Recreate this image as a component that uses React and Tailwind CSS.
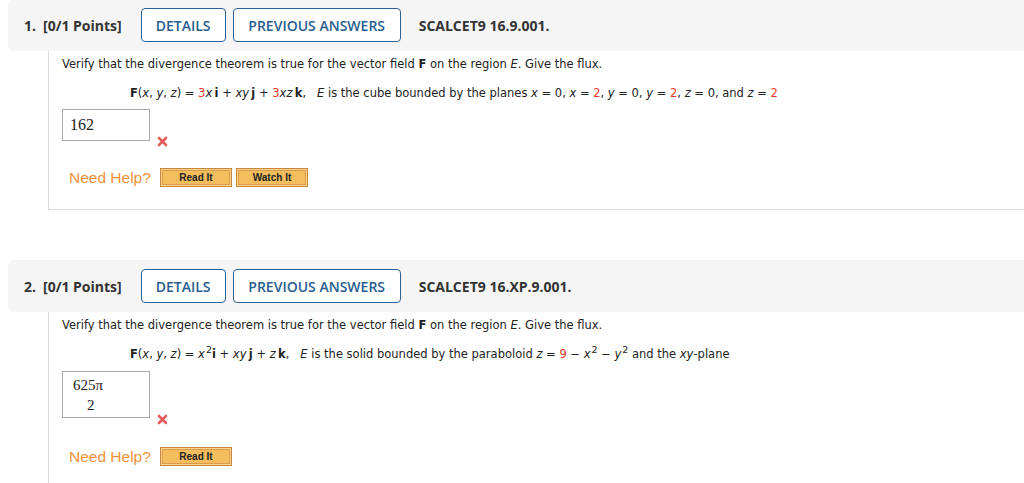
import React from "react";

const red = "text-[#e8372b]";

const Header = ({ num, code, first }) => (
  <div
    className={`ml-2 flex h-[52px] items-center rounded-l-md bg-[#f5f5f5] pl-4 font-['Open_Sans',sans-serif] text-[#333] ${
      first ? "-mt-px" : ""
    }`}
  >
    <span className="w-[19px] text-[14px] font-bold">{num}.</span>
    <span className="text-[14px] font-bold">[0/1 Points]</span>
    <button className="ml-[19px] h-[34px] w-[85px] rounded border border-[#2c6396] bg-white text-[14px] font-semibold text-[#2a5d8f]">
      DETAILS
    </button>
    <button className="ml-[7px] h-[34px] w-[168px] rounded border border-[#2c6396] bg-white text-[14px] font-semibold text-[#2a5d8f]">
      PREVIOUS ANSWERS
    </button>
    <span className="ml-[18px] text-[14px] font-bold">{code}</span>
  </div>
);

const HelpBtn = ({ children }) => (
  <button className="flex h-[19px] w-[72px] items-center justify-center border border-[#c9843e] bg-[#f4bd5e] font-['Liberation_Sans',Arial,sans-serif] text-[10px] font-bold text-[#222] shadow-[inset_0_0_0_1px_#f9d48c,inset_0_0_0_2px_#dc9a4a]">
    {children}
  </button>
);

const Cross = () => (
  <svg width="11" height="11" viewBox="0 0 11 11" className="ml-[7px]">
    <path d="M2 2 L9 9 M9 2 L2 9" stroke="#e35b5b" strokeWidth="2.6" strokeLinecap="round" />
  </svg>
);

const I = ({ children }) => <i>{children}</i>;
const B = ({ children }) => <b>{children}</b>;

export default function App() {
  return (
    <div className="h-[483px] overflow-hidden bg-white">
      <Header num="1" code="SCALCET9 16.9.001." first />
      <div className="ml-12 h-[159px] border-b border-l border-[#dcdcdc] pl-[13px] font-['DejaVu_Sans',Verdana,sans-serif] text-[11.5px] text-[#222]">
        <p className="pt-[6px] leading-[14px]">
          Verify that the divergence theorem is true for the vector field <B>F</B> on the region <I>E</I>. Give the flux.
        </p>
        <p className="mt-[15px] pl-[68px] leading-[14px] whitespace-nowrap">
          <B>F</B>(<I>x</I>, <I>y</I>, <I>z</I>) = <span className={red}>3</span>
          <I>x</I>&thinsp;<B>i</B> + <I>xy</I>&thinsp;<B>j</B> + <span className={red}>3</span>
          <I>xz</I>&thinsp;<B>k</B>,&nbsp;&nbsp;&nbsp;<I>E</I> is the cube bounded by the planes <I>x</I> = 0, <I>x</I> ={" "}
          <span className={red}>2</span>, <I>y</I> = 0, <I>y</I> = <span className={red}>2</span>, <I>z</I> = 0, and <I>z</I> ={" "}
          <span className={red}>2</span>
        </p>
        <div className="mt-[9px] flex items-end">
          <div className="h-[32px] w-[88px] border border-[#aaa] pl-[7px] pt-[3px] font-['Liberation_Serif',serif] text-[16px] text-[#222]">
            162
          </div>
          <div className="-mb-[6px]">
            <Cross />
          </div>
        </div>
        <div className="mt-[25px] flex items-center">
          <span className="ml-[7px] w-[91px] font-['Liberation_Sans',Arial,sans-serif] text-[15.5px] text-[#f0923a]">
            Need Help?
          </span>
          <HelpBtn>Read It</HelpBtn>
          <span className="w-1" />
          <HelpBtn>Watch It</HelpBtn>
        </div>
      </div>

      <div className="mt-[50px]">
        <Header num="2" code="SCALCET9 16.XP.9.001." />
      </div>
      <div className="ml-12 h-[172px] border-l border-[#dcdcdc] pl-[13px] font-['DejaVu_Sans',Verdana,sans-serif] text-[11.5px] text-[#222]">
        <p className="pt-[6px] leading-[14px]">
          Verify that the divergence theorem is true for the vector field <B>F</B> on the region <I>E</I>. Give the flux.
        </p>
        <p className="mt-[15px] pl-[68px] leading-[14px] whitespace-nowrap">
          <B>F</B>(<I>x</I>, <I>y</I>, <I>z</I>) = <I>x</I>
          <sup className="ml-px text-[9.5px]">2</sup>
          <B>i</B> + <I>xy</I>&thinsp;<B>j</B> + <I>z</I>&thinsp;<B>k</B>,&nbsp;&nbsp;&nbsp;<I>E</I> is the solid bounded by the
          paraboloid <I>z</I> = <span className={red}>9</span> − <I>x</I>
          <sup className="ml-px text-[9.5px]">2</sup> − <I>y</I>
          <sup className="ml-px text-[9.5px]">2</sup> and the <I>xy</I>-plane
        </p>
        <div className="mt-[10px] flex items-end">
          <div className="flex h-[47px] w-[88px] flex-col border border-[#aaa] pl-[10px] pt-[3px] font-['Liberation_Serif',serif] text-[15px] leading-[20px] text-[#222]">
            <span>625π</span>
            <span className="pl-[14px]">2</span>
          </div>
          <div className="-mb-[7px]">
            <Cross />
          </div>
        </div>
        <div className="mt-[27px] flex items-center">
          <span className="ml-[7px] w-[91px] font-['Liberation_Sans',Arial,sans-serif] text-[15.5px] text-[#f0923a]">
            Need Help?
          </span>
          <HelpBtn>Read It</HelpBtn>
        </div>
      </div>
    </div>
  );
}
